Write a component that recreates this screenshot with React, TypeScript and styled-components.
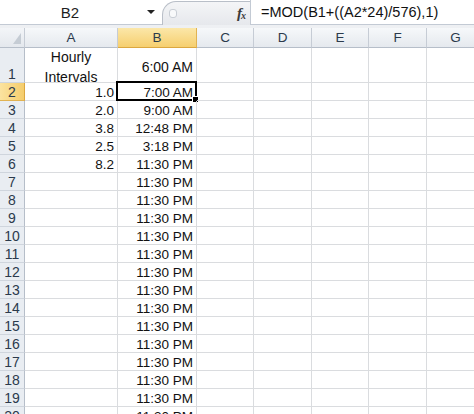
import React from "react";
import styled, { createGlobalStyle, css } from "styled-components";

const GlobalStyle = createGlobalStyle`
  html, body {
    margin: 0;
    padding: 0;
    background: #ffffff;
    overflow: hidden;
  }
  body {
    font-family: "Liberation Sans", Arial, sans-serif;
  }
`;

const COLS = ["A", "B", "C", "D", "E", "F", "G"];
const WIDTHS = [25, 93, 79, 57, 58, 57, 58, 58];

const hourly = ["1.0", "2.0", "3.8", "2.5", "8.2"];
const times = ["7:00 AM", "9:00 AM", "12:48 PM", "3:18 PM", "11:30 PM"];

const Sheet = styled.div`
  width: 474px;
  height: 414px;
  overflow: hidden;
  background: #ffffff;
`;

const FormulaBar = styled.div`
  display: flex;
  align-items: stretch;
  height: 24px;
  border-bottom: 1px solid #c3cad4;
  background: #ffffff;
`;

const NameBox = styled.div`
  width: 140px;
  display: flex;
  align-items: center;
  justify-content: center;
  font-size: 15px;
  color: #1e1e1e;
`;

const DropArrow = styled.div`
  width: 22px;
  display: flex;
  align-items: center;
  justify-content: center;
  &::before {
    content: "";
    border-left: 4px solid transparent;
    border-right: 4px solid transparent;
    border-top: 4px solid #222;
  }
`;

const FxPill = styled.div`
  width: 88px;
  margin-top: 1px;
  margin-bottom: -1px;
  border: 1px solid #b9bfc8;
  border-right: none;
  border-bottom: none;
  border-radius: 14px 0 0 0;
  background: linear-gradient(#f4f5f7, #e6e8ec);
  display: flex;
  align-items: center;
  justify-content: space-between;
  padding: 0 5px 0 6px;
  box-sizing: border-box;
`;

const Grip = styled.span`
  width: 6px;
  height: 7px;
  border-radius: 3px;
  border: 1px solid #c9ced5;
  background: #f8f9fa;
`;

const Fx = styled.span`
  font-family: "Liberation Serif", "Times New Roman", serif;
  font-style: italic;
  font-weight: bold;
  font-size: 15px;
  color: #3a3a3a;
  letter-spacing: -1px;
  sub {
    font-size: 10px;
    vertical-align: -1px;
  }
`;

const FormulaInput = styled.div`
  flex: 1;
  border-left: 1px solid #c3cad4;
  display: flex;
  align-items: center;
  padding-left: 10px;
  font-size: 14.5px;
  color: #111;
  white-space: nowrap;
`;

const Band = styled.div`
  height: 3px;
  background: #eef0f3;
`;

const Grid = styled.div`
  display: grid;
  grid-template-columns: ${WIDTHS.map((w) => `${w}px`).join(" ")};
  grid-template-rows: 20px 35px;
  grid-auto-rows: 18px;
`;

const headerBase = css`
  box-sizing: border-box;
  border-right: 1px solid #c6ccd5;
  border-bottom: 1px solid #b6bec9;
  font-size: 13.5px;
  color: #2b3a4c;
  display: flex;
  justify-content: center;
  white-space: nowrap;
  overflow: hidden;
`;

const ColHeader = styled.div<{ $active?: boolean }>`
  ${headerBase};
  align-items: center;
  background: ${(p) =>
    p.$active
      ? "linear-gradient(#fbe7a9, #f6cf6f)"
      : "linear-gradient(#f6f8fa, #e5e9ee)"};
  border-right-color: ${(p) => (p.$active ? "#e1b352" : "#c6ccd5")};
  border-bottom-color: ${(p) => (p.$active ? "#dba740" : "#b6bec9")};
`;

const Corner = styled.div`
  ${headerBase};
  position: relative;
  background: linear-gradient(#f3f5f8, #e4e8ed);
  &::after {
    content: "";
    position: absolute;
    right: 3px;
    bottom: 3px;
    border-left: 8px solid transparent;
    border-bottom: 11px solid #c5ccd4;
  }
`;

const RowHeader = styled.div<{ $active?: boolean }>`
  ${headerBase};
  align-items: flex-end;
  padding-bottom: 0;
  background: ${(p) =>
    p.$active ? "linear-gradient(90deg, #fbe3a0, #f5cd6c)" : "#e9edf2"};
  border-right-color: ${(p) => (p.$active ? "#dba740" : "#b6bec9")};
  border-bottom-color: ${(p) => (p.$active ? "#e1b352" : "#cfd5dd")};
  font-size: 14px;
`;

const Cell = styled.div<{ $align?: "left" | "right" | "center"; $selected?: boolean }>`
  box-sizing: border-box;
  border-right: 1px solid #dadcdf;
  border-bottom: 1px solid #dadcdf;
  font-size: 13.5px;
  color: #111;
  display: flex;
  align-items: flex-end;
  justify-content: ${(p) =>
    p.$align === "right" ? "flex-end" : p.$align === "center" ? "center" : "flex-start"};
  padding: 0 3px 0 3px;
  white-space: nowrap;
  position: relative;
  ${(p) =>
    p.$selected &&
    css`
      &::before {
        content: "";
        position: absolute;
        left: -2px;
        top: -2px;
        right: -1px;
        bottom: -1px;
        border: 2px solid #000;
      }
      &::after {
        content: "";
        position: absolute;
        right: -3px;
        bottom: -3px;
        width: 5px;
        height: 5px;
        background: #000;
        border: 1px solid #fff;
      }
    `}
`;

const TwoLine = styled(Cell)`
  flex-direction: column;
  align-items: center;
  justify-content: flex-start;
  text-align: center;
  line-height: 20px;
  font-size: 14px;
  padding-top: 0;
  span:first-child {
    margin-top: -1px;
  }
`;

const MidCell = styled(Cell)`
  align-items: center;
  padding-top: 3px;
  font-size: 14px;
`;

export default function App() {
  const rows: React.ReactNode[] = [];
  for (let r = 2; r <= 21; r++) {
    const i = r - 2;
    rows.push(
      <React.Fragment key={r}>
        <RowHeader $active={r === 2}>{r}</RowHeader>
        <Cell $align="right">{hourly[i] ?? ""}</Cell>
        <Cell $align="right" $selected={r === 2}>
          {times[i] ?? "11:30 PM"}
        </Cell>
        {COLS.slice(2).map((c) => (
          <Cell key={c} />
        ))}
      </React.Fragment>
    );
  }

  return (
    <Sheet>
      <GlobalStyle />
      <FormulaBar>
        <NameBox>B2</NameBox>
        <DropArrow />
        <FxPill>
          <Grip />
          <Fx>
            f<sub>x</sub>
          </Fx>
        </FxPill>
        <FormulaInput>=MOD(B1+((A2*24)/576),1)</FormulaInput>
      </FormulaBar>
      <Band />
      <Grid>
        <Corner />
        {COLS.map((c) => (
          <ColHeader key={c} $active={c === "B"}>
            {c}
          </ColHeader>
        ))}

        <RowHeader>1</RowHeader>
        <TwoLine>
          <span>Hourly</span>
          <span>Intervals</span>
        </TwoLine>
        <MidCell $align="right">6:00 AM</MidCell>
        {COLS.slice(2).map((c) => (
          <Cell key={c} />
        ))}

        {rows}
      </Grid>
    </Sheet>
  );
}
